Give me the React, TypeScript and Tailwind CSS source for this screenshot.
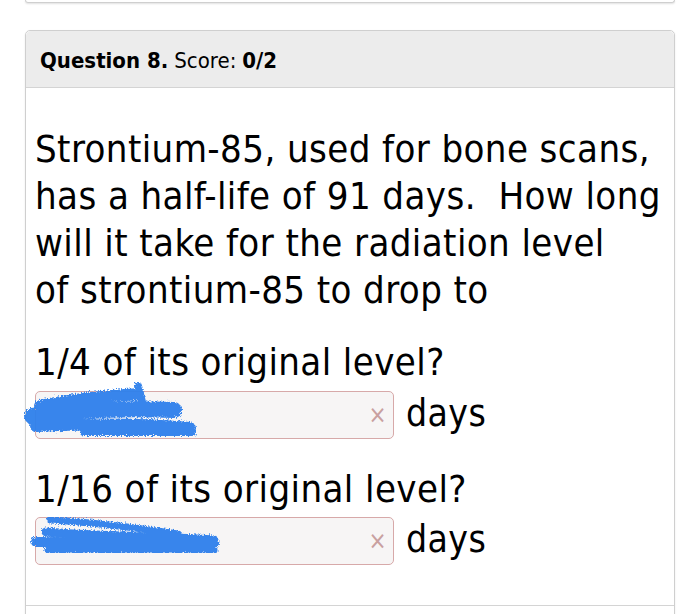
import React from "react";

const font = { fontFamily: '"DejaVu Sans Condensed", "DejaVu Sans", "Liberation Sans", sans-serif' };

function Scribble({ variant }: { variant: 1 | 2 }) {
  if (variant === 1) {
    return (
      <svg className="absolute left-[-12px] top-[-14px] pointer-events-none" width="180" height="64" viewBox="0 0 180 64">
        <defs>
          <filter id="rough1">
            <feTurbulence type="fractalNoise" baseFrequency="0.8" numOctaves="2" result="n" />
            <feDisplacementMap in="SourceGraphic" in2="n" scale="6" />
          </filter>
        </defs>
        <g filter="url(#rough1)" stroke="#2f80ec" strokeLinecap="round" fill="none" opacity="0.95">
          <path d="M16 28 C50 20 90 18 114 16" strokeWidth="12" />
          <path d="M114 8 L118 24" strokeWidth="8" />
          <path d="M8 38 C50 32 100 30 150 32" strokeWidth="16" />
          <path d="M12 48 C60 46 120 46 166 50" strokeWidth="12" />
          <path d="M60 54 C100 54 140 54 168 54" strokeWidth="8" />
        </g>
      </svg>
    );
  }
  return (
    <svg className="absolute left-[-8px] top-[-8px] pointer-events-none" width="200" height="52" viewBox="0 0 200 52">
      <defs>
        <filter id="rough2">
          <feTurbulence type="fractalNoise" baseFrequency="0.8" numOctaves="2" result="n" />
          <feDisplacementMap in="SourceGraphic" in2="n" scale="6" />
        </filter>
      </defs>
      <g filter="url(#rough2)" stroke="#2f80ec" strokeLinecap="round" fill="none" opacity="0.95">
        <path d="M22 10 C60 12 110 18 150 24" strokeWidth="7" />
        <path d="M18 22 C60 26 120 26 186 30" strokeWidth="9" />
        <path d="M8 32 C60 32 130 32 186 34" strokeWidth="10" />
        <path d="M20 40 C70 40 140 40 186 40" strokeWidth="7" />
      </g>
    </svg>
  );
}

function AnswerRow({ variant }: { variant: 1 | 2 }) {
  return (
    <div className="flex items-center">
      <div className="relative w-[359px] h-[48px] rounded-[5px] border border-[#d7a9a9] bg-[#f7f5f5]">
        <Scribble variant={variant} />
        <span className="absolute right-[6px] top-1/2 -translate-y-1/2 text-[24px] leading-none text-[#c9a0a0]">×</span>
      </div>
      <span className="ml-[12px] -mt-[4px] text-[37px] leading-none text-black tracking-[0.4px]">days</span>
    </div>
  );
}

export default function App() {
  return (
    <div className="w-[700px] h-[614px] overflow-hidden bg-white relative" style={font}>
      {/* previous card tail */}
      <div className="mx-[25px] h-[3px] rounded-b-[5px] border border-t-0 border-[#cfcfcf] shadow-[0_1px_2px_rgba(0,0,0,0.12)]" />

      <div className="mx-[25px] mt-[27px] rounded-t-[5px] border border-[#cfcfcf] shadow-[0_1px_2px_rgba(0,0,0,0.1)]">
        <div className="h-[57px] bg-[#ececec] border-b border-[#d4d4d4] rounded-t-[5px] flex items-center pl-[14px] pt-[2px] text-[22px] text-black">
          <span className="font-bold">Question 8.</span>
          <span className="ml-[6px]">Score:</span>
          <span className="ml-[6px] font-bold">0/2</span>
        </div>

        <div className="pl-[9px] pt-[38px] pb-[40px] text-black text-[38px] tracking-[0.4px]">
          <p className="leading-[47px] whitespace-nowrap">
            Strontium-85, used for bone scans,
            <br />
            has a half-life of 91 days.&nbsp; How long
            <br />
            will it take for the radiation level
            <br />
            of strontium-85 to drop to
          </p>

          <p className="mt-[25px] leading-[47px] whitespace-nowrap">1/4 of its original level?</p>
          <div className="mt-[5px]">
            <AnswerRow variant={1} />
          </div>

          <p className="mt-[27px] leading-[47px] whitespace-nowrap">1/16 of its original level?</p>
          <div className="mt-[4px]">
            <AnswerRow variant={2} />
          </div>
        </div>
        <div className="border-t border-[#d4d4d4] h-[20px]" />
      </div>
    </div>
  );
}
